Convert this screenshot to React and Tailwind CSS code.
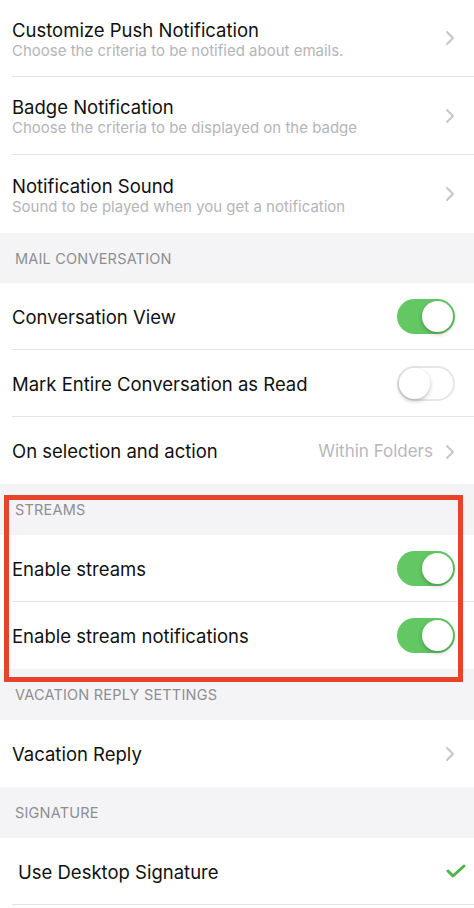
import React from 'react';

const font = { fontFamily: 'Inter, "Liberation Sans", sans-serif' };

const Chevron = () => (
  <svg width="10" height="16" viewBox="0 0 10 16" className="shrink-0">
    <path d="M2 2l6 6-6 6" fill="none" stroke="#c7c7cc" strokeWidth="2" strokeLinecap="round" strokeLinejoin="round" />
  </svg>
);

const Toggle = ({ on }) =>
  on ? (
    <div className="w-[58px] h-[35px] rounded-full bg-[#63c763] flex items-center justify-end p-[2px] shrink-0">
      <div className="w-[31px] h-[31px] rounded-full bg-white shadow-[0_2px_4px_rgba(0,0,0,0.25)]" />
    </div>
  ) : (
    <div className="w-[58px] h-[35px] rounded-full bg-white border-2 border-[#e6e6e9] flex items-center justify-start shrink-0">
      <div className="w-[31px] h-[31px] rounded-full bg-white shadow-[0_2px_4px_rgba(0,0,0,0.25)]" />
    </div>
  );

const SubRow = ({ title, subtitle, border, h }) => (
  <div className={`pl-3 bg-white ${h}`}>
    <div className={`h-full flex items-center justify-between pr-[19px] ${border ? 'border-b border-[#e3e3e6]' : ''}`}>
      <div className="flex flex-col pt-[3px]">
        <span className="text-[18.5px] leading-[22px] text-[#111]">{title}</span>
        <span className="text-[15px] leading-[20px] text-[#b5b5b9]">{subtitle}</span>
      </div>
      <Chevron />
    </div>
  </div>
);

const Row = ({ title, border = true, right, indent = 'pl-3', pr = 'pr-[19px]' }) => (
  <div className={`${indent} bg-white h-[67px]`}>
    <div className={`h-full flex items-center justify-between ${pr} ${border ? 'border-b border-[#e3e3e6]' : ''}`}>
      <span className="text-[18.5px] text-[#111] pt-[3px]">{title}</span>
      {right}
    </div>
  </div>
);

const Header = ({ children, h = 'h-[50px]' }) => (
  <div className={`${h} bg-[#f4f4f6] flex items-center pl-[15px] pt-[1px]`}>
    <span className="text-[14.5px] text-[#8e8e93] tracking-[0.2px]">{children}</span>
  </div>
);

export default function App() {
  return (
    <div className="relative w-[474px] h-[908px] bg-white overflow-hidden" style={font}>
      <SubRow title="Customize Push Notification" subtitle="Choose the criteria to be notified about emails." border h="h-[77px]" />
      <SubRow title="Badge Notification" subtitle="Choose the criteria to be displayed on the badge" border h="h-[78px]" />
      <SubRow title="Notification Sound" subtitle="Sound to be played when you get a notification" h="h-[78px]" />

      <Header>MAIL CONVERSATION</Header>
      <Row title="Conversation View" right={<Toggle on />} />
      <Row title="Mark Entire Conversation as Read" right={<Toggle on={false} />} />
      <Row
        title="On selection and action"
        border={false}
        right={
          <div className="flex items-center gap-[12px] pt-[2px]">
            <span className="text-[17px] text-[#b8b8bc]">Within Folders</span>
            <Chevron />
          </div>
        }
      />

      <Header h="h-[51px]">STREAMS</Header>
      <Row title="Enable streams" right={<Toggle on />} />
      <Row title="Enable stream notifications" border={false} right={<Toggle on />} />

      <Header h="h-[51px]">VACATION REPLY SETTINGS</Header>
      <Row title="Vacation Reply" border={false} right={<Chevron />} />

      <Header h="h-[51px]">SIGNATURE</Header>
      <div className="pl-3 bg-white h-[67px]">
        <div className="h-full flex items-center justify-between pl-[6px] pr-[8px] border-b border-[#e3e3e6]">
          <span className="text-[18.5px] text-[#111] pt-[3px]">Use Desktop Signature</span>
          <svg width="20" height="14" viewBox="0 0 20 14">
            <path d="M2 7l5 5L18 2" fill="none" stroke="#4cb648" strokeWidth="3" strokeLinecap="round" strokeLinejoin="round" />
          </svg>
        </div>
      </div>

      {/* highlight box over the streams section */}
      <div className="absolute left-[4px] top-[495px] w-[459px] h-[187px] border-[5px] border-[#e8412c] pointer-events-none" />
    </div>
  );
}
